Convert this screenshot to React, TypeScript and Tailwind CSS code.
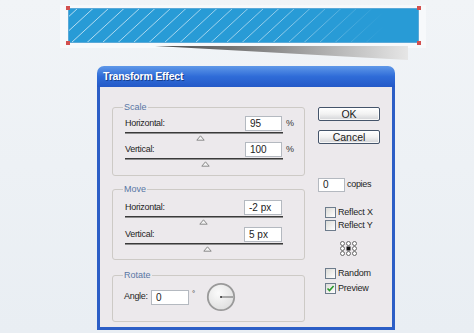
import React from 'react';

const BODY_BG = 'bg-[#ece9ec]';

const Triangle: React.FC<{ offset: string }> = ({ offset }) => (
  <svg width="9" height="6" viewBox="0 0 9 6" className={`block mt-[1px] ${offset}`}>
    <polygon points="4.5,0.8 8.2,5.2 0.8,5.2" fill="#f4f4f4" stroke="#8a8a8a" strokeWidth="1" />
  </svg>
);

const SliderRow: React.FC<{ label: string; value: string; unit: string; input: string; offset: string }> = ({
  label,
  value,
  unit,
  input,
  offset,
}) => (
  <div>
    <div className="flex items-center h-[15px]">
      <span className="flex-1 text-[9px] tracking-[-0.3px] text-[#1e1e1e]">{label}</span>
      <div className={`${input} h-[15px] border border-[#b4b9c0] bg-white pl-[4px] text-[10px] leading-[13px] text-[#222]`}>
        {value}
      </div>
      <span className="w-[22px] pl-[4px] text-[9px] text-[#333]">{unit}</span>
    </div>
    <div className="mt-[1px] mr-[21px] h-[2px] bg-[#3a3a3a] border-b border-[#8d8d8d]" />
    <Triangle offset={offset} />
  </div>
);

const Group: React.FC<{ label: string; className?: string; children: React.ReactNode }> = ({ label, className, children }) => (
  <div className={`relative border border-[#cdcac6] rounded-[3px] ${className ?? ''}`}>
    <span className={`absolute left-[10px] -top-[7px] ${BODY_BG} px-[1px] text-[9px] leading-[12px] text-[#5876a4]`}>
      {label}
    </span>
    {children}
  </div>
);

const Checkbox: React.FC<{ label: string; checked?: boolean; className?: string }> = ({ label, checked, className }) => (
  <div className={`flex items-center h-[11px] ml-[7px] ${className ?? ''}`}>
    <div className="w-[11px] h-[11px] border border-[#6d7c8c] bg-gradient-to-br from-[#dcdcd8] to-white flex items-center justify-center">
      {checked && (
        <svg width="9" height="9" viewBox="0 0 9 9">
          <path d="M1.5 4.5 L3.5 6.6 L7.6 2" fill="none" stroke="#2a9a2a" strokeWidth="1.6" />
        </svg>
      )}
    </div>
    <span className="ml-[2px] text-[9px] tracking-[-0.2px] text-[#1e1e1e]">{label}</span>
  </div>
);

const Button: React.FC<{ children: React.ReactNode; className?: string }> = ({ children, className }) => (
  <div
    className={`w-[62px] h-[14px] rounded-[2px] border border-[#44546a] bg-gradient-to-b from-white via-[#f2f2f2] to-[#d2d3d6] shadow-[inset_0_0_0_1px_rgba(255,255,255,0.8)] flex items-center justify-center text-[10.5px] leading-none text-[#1a1a1a] ${className ?? ''}`}
  >
    {children}
  </div>
);

const Banner: React.FC = () => {
  const stripes = [];
  for (let x = 40; x < 420; x += 15.5) stripes.push(x);
  return (
    <svg width="474" height="66" viewBox="0 0 474 66" className="block">
      <defs>
        <linearGradient id="fade" gradientUnits="userSpaceOnUse" x1="68" y1="0" x2="419" y2="0">
          <stop offset="0" stopColor="#ffffff" stopOpacity="0.75" />
          <stop offset="0.6" stopColor="#ffffff" stopOpacity="0.55" />
          <stop offset="0.9" stopColor="#ffffff" stopOpacity="0" />
        </linearGradient>
        <linearGradient id="shadow" x1="0" y1="0" x2="1" y2="0">
          <stop offset="0" stopColor="#4a4a4a" />
          <stop offset="0.45" stopColor="#8a8a8a" />
          <stop offset="1" stopColor="#e6e6e6" />
        </linearGradient>
        <clipPath id="bar">
          <rect x="68" y="8" width="351" height="35" />
        </clipPath>
      </defs>
      <rect x="60" y="5" width="366" height="43" fill="#f7f9fb" />
      <rect x="68" y="8" width="351" height="35" fill="#289bd6" />
      <g clipPath="url(#bar)">
        {stripes.map((x) => (
          <line key={x} x1={x} y1="43" x2={x + 38} y2="8" stroke="url(#fade)" strokeWidth="0.9" />
        ))}
      </g>
      <rect x="68.5" y="8.5" width="350" height="34" fill="none" stroke="#5aa9d8" strokeWidth="1" />
      <polygon points="155,46 408,46 408,60" fill="url(#shadow)" />
      {[
        [68, 8],
        [419, 8],
        [68, 43],
        [419, 43],
      ].map(([x, y]) => (
        <rect key={`${x}-${y}`} x={x - 2} y={y - 2} width="4" height="4" fill="#d2504f" />
      ))}
    </svg>
  );
};

const RefPoint: React.FC = () => (
  <svg width="18" height="16" viewBox="0 0 18 16" className="block ml-[22px] mt-[10px]">
    {[2.5, 8.5, 14.5].map((cx) =>
      [2.5, 7.5, 12.5].map((cy) =>
        cx === 8.5 && cy === 7.5 ? (
          <rect key={`${cx}${cy}`} x="6.5" y="5.5" width="4" height="4" fill="#111" />
        ) : (
          <circle key={`${cx}${cy}`} cx={cx} cy={cy} r="2" fill="#fff" stroke="#5a5a5a" strokeWidth="0.9" />
        ),
      ),
    )}
  </svg>
);

const Dial: React.FC = () => (
  <svg width="30" height="30" viewBox="0 0 30 30" className="block ml-[11px]">
    <defs>
      <radialGradient id="dialFill" cx="0.4" cy="0.35" r="0.7">
        <stop offset="0" stopColor="#fbfbfb" />
        <stop offset="1" stopColor="#dedede" />
      </radialGradient>
    </defs>
    <circle cx="15" cy="15" r="13.2" fill="url(#dialFill)" stroke="#9a9a9a" strokeWidth="1.8" />
    <line x1="15" y1="15" x2="27" y2="15" stroke="#555" strokeWidth="0.9" />
    <circle cx="15" cy="15" r="1" fill="#333" />
  </svg>
);

export default function App() {
  return (
    <div className="w-[474px] h-[333px] overflow-hidden bg-gradient-to-b from-[#f1f4f7] to-[#e9eef3] font-['Liberation_Sans',Arial,sans-serif]">
      <Banner />
      <div className="ml-[97px] w-[298px]">
        {/* title bar */}
        <div className="h-[21px] rounded-t-[7px] bg-gradient-to-b from-[#5f98e8] via-[#2f6cd8] to-[#2459c8] flex items-center pl-[6px]">
          <span className="text-[10.5px] font-bold tracking-[-0.2px] text-white [text-shadow:1px_1px_0_#163e8c]">
            Transform Effect
          </span>
        </div>
        <div className={`h-[243px] border-x-[3px] border-b-[3px] border-[#2c5ec6] ${BODY_BG} flex pt-[20px] pl-[12px]`}>
          {/* left column */}
          <div className="w-[193px] flex flex-col">
            <Group label="Scale" className="pt-[8px] pb-[8px] pl-[12px]">
              <SliderRow label="Horizontal:" value="95" unit="%" input="w-[37px]" offset="ml-[71px]" />
              <div className="mt-[1px]">
                <SliderRow label="Vertical:" value="100" unit="%" input="w-[37px]" offset="ml-[76px]" />
              </div>
            </Group>
            <Group label="Move" className="mt-[13px] pt-[10px] pb-[7px] pl-[12px]">
              <SliderRow label="Horizontal:" value="-2 px" unit="" input="w-[38px]" offset="ml-[74px]" />
              <div className="mt-[2px]">
                <SliderRow label="Vertical:" value="5 px" unit="" input="w-[38px]" offset="ml-[78px]" />
              </div>
            </Group>
            <Group label="Rotate" className="mt-[15px] pt-[6px] pb-[9px] pl-[11px]">
              <div className="flex items-center h-[30px]">
                <span className="w-[27px] text-[9px] tracking-[-0.3px] text-[#1e1e1e]">Angle:</span>
                <div className="w-[38px] h-[15px] border border-[#b4b9c0] bg-white pl-[4px] text-[10px] leading-[13px] text-[#222]">
                  0
                </div>
                <span className="ml-[3px] -mt-[6px] text-[8px] text-[#333]">°</span>
                <Dial />
              </div>
            </Group>
          </div>
          {/* right column */}
          <div className="ml-[13px] flex flex-col">
            <Button>OK</Button>
            <Button className="mt-[9px]">Cancel</Button>
            <div className="mt-[34px] flex items-center h-[14px]">
              <div className="w-[27px] h-[14px] border border-[#b4b9c0] bg-white pl-[4px] text-[10px] leading-[12px] text-[#222]">
                0
              </div>
              <span className="ml-[2px] text-[9px] tracking-[-0.3px] text-[#1e1e1e]">copies</span>
            </div>
            <Checkbox label="Reflect X" className="mt-[15px]" />
            <Checkbox label="Reflect Y" className="mt-[2px]" />
            <RefPoint />
            <Checkbox label="Random" className="mt-[11px]" />
            <Checkbox label="Preview" checked className="mt-[4px]" />
          </div>
        </div>
      </div>
    </div>
  );
}
